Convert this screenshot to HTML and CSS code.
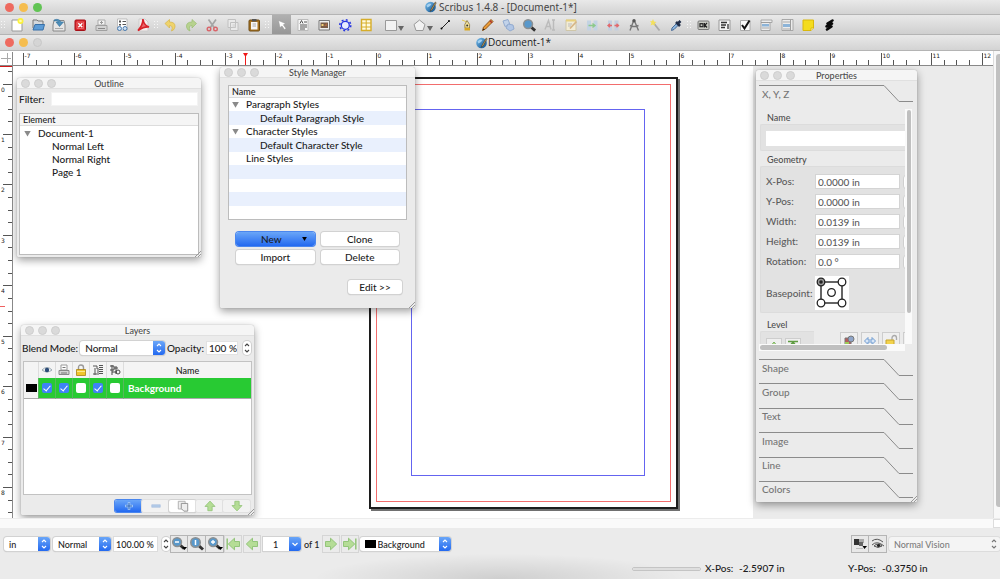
FILE: index.html
```html
<!DOCTYPE html>
<html lang="en">
<head>
<meta charset="utf-8">
<title>Scribus 1.4.8 - [Document-1*]</title>
<link rel="stylesheet" href="styles.css">
</head>
<body>
<svg class="defs" aria-hidden="true">
  <defs>
    <linearGradient id="ball" x1="0" y1="0" x2="1" y2="1"><stop offset="0" stop-color="#7cc0ee"/><stop offset="1" stop-color="#0d4f8c"/></linearGradient>
    <symbol id="logo" viewBox="0 0 12 12"><circle cx="5.500" cy="6" r="5.300" fill="url(#ball)"/><path d="M1.500 4.500Q4 1.500 6.500 3Q5 6 2.500 6.500z" fill="#a4d0ef"/><path d="M10.300 1L6.300 7.800L5 10.500L7.300 8.800L11.200 1.800z" fill="#dba84c" stroke="#33383c" stroke-width=".6"/></symbol>
    <symbol id="lens" viewBox="0 0 16 16"><path d="M9 9L14 13.500" stroke="#333" stroke-width="3"/><circle cx="6.500" cy="6.500" r="4.700" fill="#5898cb" stroke="#8b8f91" stroke-width="1.600"/></symbol>
    <symbol id="arrow-r" viewBox="0 0 14 14"><path d="M1.500 4.500h5V1.200L12.700 7L6.500 12.800V9.500h-5z" fill="#b5dd96" stroke="#93c57a"/></symbol>
    <symbol id="updown" viewBox="0 0 8 14"><path d="M2 5L4 3L6 5M2 9L4 11L6 9" fill="none" stroke="currentColor" stroke-width="1.100"/></symbol>
  </defs>
</svg>

<header class="titlebar">
  <div class="lights"><i class="red"></i><i class="amber"></i><i class="green"></i></div>
  <h1 class="app-title"><svg class="logo"><use href="#logo"/></svg>Scribus 1.4.8 - [Document-1*]</h1>
</header>

<nav class="toolbar" aria-label="Tools">
  <span class="grip"></span>
  <button class="tool" aria-label="New"><svg viewBox="0 0 16 16"><path d="M3 3h10v11H3z" fill="#fff" stroke="#999"/><circle cx="11.500" cy="4" r="3" fill="#fbf23c"/><circle cx="11.500" cy="4" r="1.300" fill="#fffbb0"/></svg></button>
  <button class="tool" aria-label="Open"><svg viewBox="0 0 16 16"><path d="M3 11V3h4l1 1h5v6" fill="#d4d8dc" stroke="#777"/><path d="M3 13L5 7.500h9.500L13 13z" fill="#5c9bd6" stroke="#376fa8"/></svg></button>
  <button class="tool" aria-label="Save"><svg viewBox="0 0 16 16"><path d="M3 3.500h10L14 8v6H2V8z" fill="#e6e6e6" stroke="#888"/><path d="M4 11.500h8" stroke="#aaa"/><path d="M3 3Q8 1 10 5h2.500L8.500 9.500L5 5h2.500Q6 3 3 4z" fill="#4f8fb9" stroke="#2f6f9c" stroke-width=".6"/></svg></button>
  <button class="tool" aria-label="Close"><svg viewBox="0 0 16 16"><rect x="3" y="3" width="10.500" height="10.500" rx="1" fill="#d9252b" stroke="#a51018"/><path d="M5 5h6.500v6.500H5z" fill="none" stroke="#ef8080" stroke-width=".7"/><path d="M6.300 6.300l4 4M10.300 6.300l-4 4" stroke="#fff" stroke-width="1.500"/></svg></button>
  <button class="tool" aria-label="Print"><svg viewBox="0 0 16 16"><path d="M5 3h7v5H5z" fill="#f3f3f3" stroke="#aaa"/><path d="M7 5.500h3M8.500 4v3" stroke="#999"/><path d="M3 8.500h11v5H3z" fill="#d2d2d2" stroke="#a0a0a0"/><path d="M5 11.500h7" stroke="#888"/></svg></button>
  <button class="tool" aria-label="Preflight"><svg viewBox="0 0 16 16"><path d="M3.500 2h9.500v11h-9.500z" fill="#fff" stroke="#aaa" stroke-width=".7"/><path d="M5 3.500h2v2H5zM5 7h2v1.500H5z" fill="#555"/><path d="M8.500 4.500H12M8.500 7.500H12" stroke="#555"/><circle cx="5.500" cy="11.500" r="2" fill="#cfe2f5" stroke="#4b7cb0"/><circle cx="11" cy="11.500" r="2" fill="#cfe2f5" stroke="#4b7cb0"/></svg></button>
  <button class="tool" aria-label="Export PDF"><svg viewBox="0 0 16 16"><path d="M4 2h6l3 3v9H4z" fill="#f6eeee" stroke="#ccc"/><path d="M8 2Q8.500 8 14 10Q9 9.500 3 13.500Q8 8 8 2z" fill="#e8686c" stroke="#d8232a" stroke-width="1.700"/></svg></button>
  <span class="grip"></span>
  <button class="tool" aria-label="Undo"><svg viewBox="0 0 16 16"><path d="M3 6.500L7.500 2.500V5Q13.500 5 13 10Q12.500 13 9.500 14Q11.500 8.500 7.500 8.500V11z" fill="#efd36c" stroke="#d5b548" stroke-width=".7"/></svg></button>
  <button class="tool" aria-label="Redo"><svg viewBox="0 0 16 16"><path d="M13.500 6.500L9 2.500V5Q3 5 3.500 10Q4 13 7 14Q5 8.500 9 8.500V11z" fill="#b7d28f" stroke="#9bbd72" stroke-width=".7"/></svg></button>
  <button class="tool" aria-label="Cut"><svg viewBox="0 0 16 16"><path d="M4.500 2.500L10.500 11M12 2.500L6 11" stroke="#a5a5a5" stroke-width="1.700"/><circle cx="5" cy="12" r="1.800" fill="none" stroke="#d9656a" stroke-width="1.400"/><circle cx="11.500" cy="12" r="1.800" fill="none" stroke="#d9656a" stroke-width="1.400"/></svg></button>
  <button class="tool" aria-label="Copy"><svg viewBox="0 0 16 16"><path d="M3 2.500h7.500v8H3zM5.500 5.500H13v8H5.500z" fill="#e9e9e9" stroke="#c0c0c0"/><path d="M7.500 8H11M7.500 10H11" stroke="#ccc"/></svg></button>
  <button class="tool" aria-label="Paste"><svg viewBox="0 0 16 16"><rect x="3" y="3" width="10.500" height="11" rx="1" fill="#a87422" stroke="#6e4a12"/><path d="M5 5h6.500v7.500H5z" fill="#f7f7f7"/><path d="M6 2h4.500v2.500H6z" fill="#555"/><path d="M6.500 7h3.500M6.500 9h3.500" stroke="#aaa"/></svg></button>
  <span class="grip wide"></span>
  <button class="tool active" aria-label="Select item" aria-pressed="true"><svg viewBox="0 0 16 16"><path d="M4.500 3.500L11.500 6.500L9.300 7.800L12 11.500L10.500 12.500L8 9L6 10.500z" fill="#fff" stroke="#999" stroke-width=".5"/></svg></button>
  <button class="tool" aria-label="Text frame"><svg viewBox="0 0 16 16"><path d="M3 2.500h10v11H3z" fill="#f8f8f8" stroke="#bbb"/><path d="M5 6.500L6.500 3.500L8 6.500M9 5h3M5 8h7M5 10h7M5 12h5" fill="none" stroke="#555"/></svg></button>
  <button class="tool" aria-label="Image frame"><svg viewBox="0 0 16 16"><path d="M3 3.500h10.500v9.500H3z" fill="#eee" stroke="#777"/><path d="M4.500 5.500H12V11H4.500z" fill="#7a5c46"/><path d="M5.500 7h2v2h-2z" fill="#f3d37a"/><path d="M8 9h3V6z" fill="#b06b45"/></svg></button>
  <button class="tool" aria-label="Render frame"><svg viewBox="0 0 16 16"><circle cx="8.300" cy="8.300" r="4" fill="#e7ecff" stroke="#2534e0" stroke-width="1.300"/><circle cx="8.300" cy="8.300" r="5.500" fill="none" stroke="#2534e0" stroke-width="1.500" stroke-dasharray="1.900 2.400"/></svg></button>
  <button class="tool" aria-label="Table"><svg viewBox="0 0 16 16"><path d="M3.500 2.500h9.500v11H3.500z" fill="#fffbe0" stroke="#d6ad2a" stroke-width="1.400"/><path d="M8.200 3v10M4 6h9M4 10h9" stroke="#d6ad2a"/></svg></button>
  <button class="tool menu" aria-label="Shape"><svg viewBox="0 0 29 16"><path d="M9.500 3.500h11v10h-11z" fill="#f2f2f2" stroke="#999"/><path d="M22 9h6l-3 5z" fill="#666"/></svg></button>
  <button class="tool menu" aria-label="Polygon"><svg viewBox="0 0 29 16"><path d="M14.500 3L20 7.500L18 13.500h-7L9 7.500z" fill="#f2f2f2" stroke="#999"/><path d="M22 9h6l-3 5z" fill="#666"/></svg></button>
  <button class="tool" aria-label="Line"><svg viewBox="0 0 16 16"><path d="M4.500 11.500L12 4" stroke="#222"/><circle cx="4.500" cy="11.500" r="1"/><circle cx="12" cy="4" r="1"/></svg></button>
  <button class="tool" aria-label="Bezier curve"><svg viewBox="0 0 16 16"><path d="M4 3L9 5" stroke="#e6c84f"/><path d="M9 3.500Q13 8 11.500 11H7Q5.500 8 9 3.500z" fill="#f3e29a" stroke="#9a8a58"/><path d="M6.500 11h5.500v2.500H6.500z" fill="#d9a822"/><circle cx="9.200" cy="8.500" r="1" fill="#333"/></svg></button>
  <button class="tool" aria-label="Freehand line"><svg viewBox="0 0 16 16"><path d="M12 2.500L14 4.500L6.500 12L3.500 13.500L4.500 10.200z" fill="#ea9b37" stroke="#8f5417"/><path d="M3.500 13.500l1-2 1.200 1z" fill="#222"/><path d="M11 3.700l2 2" stroke="#a33" stroke-width="1.400"/></svg></button>
  <button class="tool" aria-label="Rotate"><svg viewBox="0 0 16 16"><path d="M3 4l5-1.500 2 5-5 2z" fill="#c2d3ea" stroke="#93abcf"/><path d="M8 7l5 1 1 4-4 2-4-3z" fill="#b1c6e5" stroke="#93abcf"/></svg></button>
  <button class="tool" aria-label="Zoom"><svg viewBox="0 0 16 16"><use href="#lens" x="1" y="1" width="15" height="15"/></svg></button>
  <button class="tool" aria-label="Edit contents"><svg viewBox="0 0 16 16"><path d="M3 12.500L6.500 3.500L9 12.500M4.500 9.500h4M11.500 3v10M10 3h3M10 13h3" fill="none" stroke="#bbb" stroke-width="1.400"/></svg></button>
  <button class="tool" aria-label="Story editor"><svg viewBox="0 0 16 16"><path d="M3 3h10v10.500H3z" fill="#f2ecd6" stroke="#cfc6a8"/><path d="M3 3.500h10" stroke="#e8d07c" stroke-width="2"/><path d="M13.500 4.500L7 11.500" stroke="#d6b586" stroke-width="1.800"/><path d="M5 7h4M5 9h3" stroke="#bbb"/></svg></button>
  <button class="tool" aria-label="Link frames"><svg viewBox="0 0 16 16"><path d="M3 3.500h4v10H3zM9.500 3.500h4v10h-4z" fill="#c3d3e3"/><path d="M4.500 8.500h6M8.500 6.500l2.500 2-2.500 2" fill="none" stroke="#8cc98c" stroke-width="1.400"/></svg></button>
  <button class="tool" aria-label="Unlink frames"><svg viewBox="0 0 16 16"><path d="M3 3.500h4v10H3zM9.500 3.500h4v10h-4z" fill="#c3cfe0"/><path d="M3.500 8.500h3.500M9.500 8.500H13M5 6.800l-2 1.700 2 1.700M11.500 6.800l2 1.700-2 1.700" fill="none" stroke="#e2696c" stroke-width="1.300"/></svg></button>
  <button class="tool" aria-label="Measure"><svg viewBox="0 0 16 16"><path d="M7.500 4L4 13.500M8.500 4L12.500 13.500M4 8.500Q8 10.500 12.500 8.500" fill="none" stroke="#777" stroke-width="1.400"/><circle cx="8" cy="3.800" r="1.700" fill="#555"/></svg></button>
  <button class="tool" aria-label="Copy properties"><svg viewBox="0 0 16 16"><path d="M7 6.500L12.500 13.500" stroke="#aaa" stroke-width="1.800"/><path d="M6 2l1 2.500 2.500.5-2 1.500.5 2.500-2-1.500L3.500 8.500l1-2.500L3 4l2 .2z" fill="#f4e05c"/></svg></button>
  <button class="tool" aria-label="Eye dropper"><svg viewBox="0 0 16 16"><path d="M9 6L4 11L3.500 13.500L6 12.500L10.500 8" fill="#8bb6e0" stroke="#4a6b96"/><path d="M8 5l4 4M10 6.500L12.500 4" stroke="#222f4a" stroke-width="2.600"/></svg></button>
  <span class="grip"></span>
  <button class="tool" aria-label="Push button"><svg viewBox="0 0 16 16"><rect x="3" y="4" width="11" height="8.500" rx="1" fill="#c9cbc4" stroke="#777"/><rect x="5" y="6.700" width="3" height="3" fill="none" stroke="#222" stroke-width="1.200"/><path d="M9.500 6v4.500M12 6L10 8.200L12 10.500" fill="none" stroke="#222" stroke-width="1.200"/></svg></button>
  <button class="tool" aria-label="Text field"><svg viewBox="0 0 16 16"><path d="M3 3h11v10.500H3z" fill="#f5f5f5" stroke="#999"/><path d="M5 5.500h6M5 8h5M5 10.500h4M12 7v5" stroke="#333" stroke-width="1.300"/></svg></button>
  <button class="tool" aria-label="Check box"><svg viewBox="0 0 16 16"><path d="M3.500 3.500h9.500v10H3.500z" fill="#f8f8f8" stroke="#aaa"/><path d="M5 8l2.500 3.500L12.500 3.500" fill="none" stroke="#111" stroke-width="2"/></svg></button>
  <button class="tool" aria-label="Combo box"><svg viewBox="0 0 16 16"><path d="M3 3h11v2.500H3zM3 5.500h9v8H3z" fill="#ececec" stroke="#999" stroke-width=".8"/><path d="M4 7h7v2.500H4z" fill="#8db4d8"/><path d="M4 11h7" stroke="#aaa"/></svg></button>
  <button class="tool" aria-label="List box"><svg viewBox="0 0 16 16"><path d="M3 2.500h8.500v11H3zM11.500 2.500H14v11h-2.500z" fill="#ececec" stroke="#999" stroke-width=".8"/><path d="M4 7h7v3H4z" fill="#8db4d8"/><path d="M4 5h7M4 12h7" stroke="#aaa"/></svg></button>
  <button class="tool" aria-label="Text annotation"><svg viewBox="0 0 16 16"><path d="M3 3h10.500v8l-2.500 2.500H3z" fill="#f4dc1e" stroke="#d9b80d"/><path d="M13.500 11H11v2.500" fill="#fff3a0" stroke="#d0ac08" stroke-width=".7"/></svg></button>
  <button class="tool" aria-label="Link annotation"><svg viewBox="0 0 16 16"><path d="M11.500 3.500L6.500 6.500M11 6.500L5.500 9.500M10.500 9.500L6 12.500" stroke="#0a0a0a" stroke-width="2.600" stroke-linecap="round"/></svg></button>
</nav>

<div class="docbar">
  <div class="lights"><i class="red"></i><i class="amber"></i><i class="off"></i></div>
  <h2 class="doc-title"><svg class="logo"><use href="#logo"/></svg>Document-1*</h2>
</div>

<main class="workspace">
  <svg class="corner" viewBox="0 0 13 15" aria-hidden="true"><path d="M1 7.500h10M7.500 2v10" stroke="#aaa"/><path d="M12.500 1v14M0 14.500h13" stroke="#888"/></svg>
  <svg class="ruler-h" id="ruler-h"></svg>
  <svg class="ruler-v" id="ruler-v"></svg>
  <div class="vscroll"><span class="thumb"></span></div>

  <div class="canvas">
    <div class="page"><div class="margins"></div><div class="guides"></div></div>

    <section class="window outline" aria-label="Outline">
      <h3 class="wintitle"><span class="dots"><i></i><i></i><i></i></span>Outline</h3>
      <div class="filter"><label for="filter">Filter:</label><input id="filter" type="text"></div>
      <div class="list">
        <div class="list-head">Element</div>
        <ul class="tree">
          <li class="open">Document-1</li>
          <li class="child">Normal Left</li>
          <li class="child">Normal Right</li>
          <li class="child">Page 1</li>
        </ul>
      </div>
      <svg class="resize" viewBox="0 0 6 6"><path d="M0 6L6 0M3 6L6 3" stroke="#999"/></svg>
    </section>

    <section class="window styles" aria-label="Style Manager">
      <h3 class="wintitle"><span class="dots"><i></i><i></i><i></i></span>Style Manager</h3>
      <div class="list">
        <div class="list-head">Name</div>
        <ul class="tree striped">
          <li class="open">Paragraph Styles</li>
          <li class="child">Default Paragraph Style</li>
          <li class="open">Character Styles</li>
          <li class="child">Default Character Style</li>
          <li>Line Styles</li>
          <li></li><li></li><li></li><li></li>
        </ul>
      </div>
      <div class="actions">
        <button class="btn primary">New<svg viewBox="0 0 6 5"><path d="M0 0h6L3 5z"/></svg></button>
        <button class="btn">Clone</button>
        <button class="btn">Import</button>
        <button class="btn">Delete</button>
      </div>
      <button class="btn edit">Edit &gt;&gt;</button>
      <svg class="resize" viewBox="0 0 6 6"><path d="M0 6L6 0M3 6L6 3" stroke="#999"/></svg>
    </section>

    <section class="window layers" aria-label="Layers">
      <h3 class="wintitle"><span class="dots"><i></i><i></i><i></i></span>Layers</h3>
      <div class="blend">
        <label for="blend">Blend Mode:</label>
        <span class="select"><select id="blend"><option>Normal</option></select><svg><use href="#updown"/></svg></span>
        <label for="opacity">Opacity:</label>
        <input id="opacity" type="text" value="100 %">
        <button class="spin" aria-label="Change opacity"><svg><use href="#updown"/></svg></button>
      </div>
      <div class="tablebox">
        <table class="layer-table">
          <thead><tr>
            <th class="ic first"></th>
            <th class="ic"><svg viewBox="0 0 12 12"><path d="M1 6Q6 1 11 6Q6 10 1 6z" fill="#f5f5f5" stroke="#9aa8b2"/><circle cx="6" cy="6" r="2.200" fill="#2c4c78"/></svg></th>
            <th class="ic"><svg viewBox="0 0 12 12"><path d="M3 1h6v5H3z" fill="#fff" stroke="#999"/><path d="M1 6.500h10v4H1z" fill="#d4d4d4" stroke="#888"/><path d="M4.500 3.500h3M3 9h6" stroke="#777"/></svg></th>
            <th class="ic"><svg viewBox="0 0 12 12"><path d="M3.500 6V3.500Q3.500 1 6 1Q8.500 1 8.500 3.500V6" fill="none" stroke="#999" stroke-width="1.400"/><path d="M1.500 5.500h9v6h-9z" fill="#f0c62c" stroke="#a98212" stroke-width=".8"/><path d="M2 7.500h8" stroke="#fbe88c"/></svg></th>
            <th class="ic"><svg viewBox="0 0 12 12"><path d="M1 2h4v3M3 4v7M1 10h4M7 1.500h4M7 3.500h4M7 5.500h4M7 7.500h4M7 9.500h4M6 4v7" fill="none" stroke="#555"/></svg></th>
            <th class="ic"><svg viewBox="0 0 12 12"><path d="M1 2h4v4H1M3 1v10M5 4h4M3 8h5" fill="none" stroke="#444"/><circle cx="9" cy="8" r="2" fill="none" stroke="#444"/><path d="M7 2v8" stroke="#444"/></svg></th>
            <th>Name</th>
          </tr></thead>
          <tbody><tr>
            <td class="ic swatch"><span></span></td>
            <td class="ic"><input type="checkbox" aria-label="Visible" checked></td>
            <td class="ic"><input type="checkbox" aria-label="Printable" checked></td>
            <td class="ic"><input type="checkbox" aria-label="Locked"></td>
            <td class="ic"><input type="checkbox" aria-label="Text flow" checked></td>
            <td class="ic"><input type="checkbox" aria-label="Outline mode"></td>
            <td class="name">Background</td>
          </tr></tbody>
        </table>
      </div>
      <div class="layer-buttons">
        <button class="btn primary" aria-label="Add layer"><svg viewBox="0 0 14 14"><path d="M2.500 7h9M7 2.500v9" stroke="#a9cdf8" stroke-width="3"/><path d="M3.500 7h7M7 3.500v7" stroke="#3168b8" stroke-width="1.200"/></svg></button>
        <button class="btn flat" aria-label="Delete layer"><svg viewBox="0 0 14 14"><path d="M2 5.500h10v3H2z" fill="#b3cbe8" stroke="#a0bbdd" stroke-width=".6"/></svg></button>
        <button class="btn" aria-label="Duplicate layer"><svg viewBox="0 0 14 14"><path d="M1.500 1.500h8v9h-8z" fill="#eee" stroke="#aaa"/><path d="M5 4h7.500v9H8L5 10z" fill="#eee" stroke="#888"/></svg></button>
        <button class="btn flat" aria-label="Raise layer"><svg viewBox="0 0 14 14"><use href="#arrow-r" transform="rotate(-90 7 7)" width="14" height="14"/></svg></button>
        <button class="btn flat" aria-label="Lower layer"><svg viewBox="0 0 14 14"><use href="#arrow-r" transform="rotate(90 7 7)" width="14" height="14"/></svg></button>
      </div>
      <svg class="resize" viewBox="0 0 6 6"><path d="M0 6L6 0M3 6L6 3" stroke="#999"/></svg>
    </section>

    <div class="backdrop"></div>
    <section class="window props" aria-label="Properties">
      <h3 class="wintitle"><span class="dots"><i></i><i></i><i></i></span>Properties</h3>
      <button class="tab first">X, Y, Z<svg viewBox="0 0 29 17"><path d="M0 .5L15 16.500H29" fill="none" stroke="#8b8b8b"/></svg></button>
      <div class="scrollarea">
        <div class="pane">
          <label class="legend" for="objname">Name</label>
          <div class="group namebox"><input id="objname" type="text"></div>
          <div class="legend">Geometry</div>
          <div class="group geometry">
            <label for="xpos">X-Pos:</label><input id="xpos" type="text" value="0.0000 in"><button class="spin" aria-label="Change X"><svg><use href="#updown"/></svg></button>
            <label for="ypos">Y-Pos:</label><input id="ypos" type="text" value="0.0000 in"><button class="spin" aria-label="Change Y"><svg><use href="#updown"/></svg></button>
            <label for="wid">Width:</label><input id="wid" type="text" value="0.0139 in"><button class="spin" aria-label="Change width"><svg><use href="#updown"/></svg></button>
            <label for="hei">Height:</label><input id="hei" type="text" value="0.0139 in"><button class="spin" aria-label="Change height"><svg><use href="#updown"/></svg></button>
            <label for="rot">Rotation:</label><input id="rot" type="text" value="0.0 °"><button class="spin" aria-label="Change rotation"><svg><use href="#updown"/></svg></button>
            <span>Basepoint:</span>
            <svg class="basepoint" viewBox="0 0 34 34"><path d="M6 6h21v21H6z" fill="none" stroke="#333" stroke-width="1.500"/><g fill="#fff" stroke="#222" stroke-width="1.300"><circle cx="6" cy="6" r="3.800" fill="#999"/><circle cx="27" cy="6" r="3.800"/><circle cx="6" cy="27" r="3.800"/><circle cx="27" cy="27" r="3.800"/><circle cx="16.500" cy="16.500" r="3.800"/></g><circle cx="6" cy="6" r="1.800" fill="#222"/></svg>
          </div>
          <div class="legend">Level</div>
          <div class="level">
            <div class="group levelbox">
              <button class="mini" aria-label="Raise"><svg viewBox="0 0 14 14"><path d="M7 3L11 8H3z" fill="#b5dd96" stroke="#7cb35f"/></svg></button>
              <button class="mini" aria-label="Raise to top"><svg viewBox="0 0 14 14"><path d="M2 2.500h10M7 3L11 8H3z" fill="#6aa84a" stroke="#5f9c42" stroke-width="1.400"/></svg></button>
            </div>
            <div class="level-tools">
              <button class="mini" aria-label="Group"><svg viewBox="0 0 14 14"><path d="M3 4h6v8H3z" fill="#b95a5a" stroke="#777"/><circle cx="9" cy="5" r="3" fill="#8fa5c9" stroke="#777"/><path d="M3 8h4v4H3z" fill="#9bcb58"/></svg></button>
              <button class="mini" aria-label="Flip"><svg viewBox="0 0 14 14"><path d="M1.500 7L5 3.500V6h4V3.500L12.500 7L9 10.500V8H5v2.500z" fill="#d8e6f7" stroke="#6f9bd0"/></svg></button>
              <button class="mini" aria-label="Lock"><svg viewBox="0 0 14 14"><path d="M8 6V4Q8 1.500 10.500 1.500Q12.500 1.500 12.500 4V6" fill="none" stroke="#aaa" stroke-width="1.300"/><path d="M2 6h8v6H2z" fill="#f3d34d" stroke="#c7a42c"/></svg></button>
              <button class="mini" aria-label="Lock size"></button>
            </div>
          </div>
        </div>
        <div class="pv"><span></span></div>
        <div class="ph"><span></span></div>
      </div>
      <div class="tabs">
        <button class="tab">Shape<svg viewBox="0 0 29 17"><path d="M0 .5L15 16.500H29" fill="none" stroke="#8b8b8b"/></svg></button>
        <button class="tab">Group<svg viewBox="0 0 29 17"><path d="M0 .5L15 16.500H29" fill="none" stroke="#8b8b8b"/></svg></button>
        <button class="tab">Text<svg viewBox="0 0 29 17"><path d="M0 .5L15 16.500H29" fill="none" stroke="#8b8b8b"/></svg></button>
        <button class="tab">Image<svg viewBox="0 0 29 17"><path d="M0 .5L15 16.500H29" fill="none" stroke="#8b8b8b"/></svg></button>
        <button class="tab">Line<svg viewBox="0 0 29 17"><path d="M0 .5L15 16.500H29" fill="none" stroke="#8b8b8b"/></svg></button>
        <button class="tab">Colors<svg viewBox="0 0 29 17"><path d="M0 .5L15 16.500H29" fill="none" stroke="#8b8b8b"/></svg></button>
      </div>
      <svg class="resize" viewBox="0 0 6 6"><path d="M0 6L6 0M3 6L6 3" stroke="#999"/></svg>
    </section>
  </div>
</main>
<div class="hscroll"><span></span></div>

<footer class="status">
  <div class="controls">
    <span class="select unit"><select aria-label="Unit"><option>in</option></select><svg><use href="#updown"/></svg></span>
    <span class="select quality"><select aria-label="Preview quality"><option>Normal</option></select><svg><use href="#updown"/></svg></span>
    <input class="zoom" type="text" aria-label="Zoom" value="100.00 %">
    <button class="spin" aria-label="Change zoom"><svg><use href="#updown"/></svg></button>
    <div class="zoomset">
      <button class="square" aria-label="Zoom out"><svg viewBox="0 0 16 16"><use href="#lens" width="15" height="15"/><path d="M4 6h4" stroke="#fff" stroke-width="1.500"/><path d="M11 11h5l-2.500 3z"/></svg></button>
      <button class="square" aria-label="Zoom to 100%"><svg viewBox="0 0 16 16"><use href="#lens" width="16" height="16"/><path d="M6.500 4v5" stroke="#fff" stroke-width="1.500"/></svg></button>
      <button class="square" aria-label="Zoom in"><svg viewBox="0 0 16 16"><use href="#lens" width="15" height="15"/><path d="M4 6h4M6 4v4" stroke="#fff" stroke-width="1.300"/><path d="M11 11h5l-2.500 3z"/></svg></button>
    </div>
    <div class="navset">
      <button class="nav" aria-label="First page"><svg viewBox="0 0 14 14"><use href="#arrow-r" transform="rotate(180 7 7)" x="-1" width="14" height="14"/><path d="M1.200 1.500v11" stroke="#93c57a" stroke-width="1.500"/></svg></button>
      <button class="nav" aria-label="Previous page"><svg viewBox="0 0 14 14"><use href="#arrow-r" transform="rotate(180 7 7)" width="14" height="14"/></svg></button>
    </div>
    <span class="select pageno"><select aria-label="Page"><option>1</option></select><svg viewBox="0 0 8 14"><path d="M1.500 6L4 8.500L6.500 6" fill="none" stroke="currentColor" stroke-width="1.200"/></svg></span>
    <span class="of">of 1</span>
    <div class="navset">
      <button class="nav" aria-label="Next page"><svg viewBox="0 0 14 14"><use href="#arrow-r" width="14" height="14"/></svg></button>
      <button class="nav" aria-label="Last page"><svg viewBox="0 0 14 14"><use href="#arrow-r" x="-1" width="14" height="14"/><path d="M12.800 1.500v11" stroke="#93c57a" stroke-width="1.500"/></svg></button>
    </div>
    <span class="select layer"><i class="chip"></i><select aria-label="Layer"><option>Background</option></select><svg><use href="#updown"/></svg></span>
    <div class="vision">
      <button class="square" aria-label="Color management"><svg viewBox="0 0 16 16"><path d="M2 3h5v6H2z" fill="#333"/><path d="M7 3h5v4H7z" fill="#aaa"/><path d="M7 6h4v4H7z" fill="#666"/><path d="M4 12.500h7" stroke="#bbb"/><path d="M10.500 10h4.500L12.500 13z"/></svg></button>
      <button class="square" aria-label="Preview mode"><svg viewBox="0 0 16 16"><path d="M2 5Q7 1 13 6M2 9Q7 4 14 10M4 10Q8 6 12 10Q8 13 4 10z" fill="none" stroke="#555"/><circle cx="8.500" cy="9.500" r="1.600" fill="#222"/></svg></button>
      <span class="select disabled"><select aria-label="Vision" disabled><option>Normal Vision</option></select><svg><use href="#updown"/></svg></span>
    </div>
  </div>
  <div class="position">
    <progress value="0" max="100" aria-label="Progress"></progress>
    <span>X-Pos:</span><span class="value">-2.5907 in</span>
    <span>Y-Pos:</span><span class="value">-0.3750 in</span>
  </div>
</footer>
<script src="rulers.js"></script>
</body>
</html>
```

FILE: styles.css
```css
* { box-sizing: border-box; }
html, body { height: 100%; }
body {
  margin: 0;
  display: flex;
  flex-direction: column;
  overflow: hidden;
  background: #ebebeb;
  color: #1c1c1c;
  font: 500 10px/13px Lato, "Noto Sans", sans-serif;
}
button, input, select {
  font: inherit;
  color: inherit;
  margin: 0;
  padding: 0;
  border: 0;
  border-radius: 0;
  background: none;
  appearance: none;
  min-width: 0;
}
h1, h2, h3, ul { margin: 0; padding: 0; font: inherit; list-style: none; }
svg { display: block; flex: none; }
.defs { position: absolute; width: 0; height: 0; }

/* Title bars */
.titlebar, .docbar {
  display: grid;
  grid-template-columns: 1fr auto 1fr;
  align-items: center;
  padding: 0 5px;
  border-bottom: 1px solid #b4b4b4;
  background: linear-gradient(#e9e9e9, #d3d3d3);
}
.titlebar { height: 15px; }
.docbar { height: 16px; }
.lights { display: flex; gap: 5px; }
.lights i { width: 9px; height: 9px; border-radius: 50%; }
.lights .red { background: #ee6a5f; }
.lights .amber { background: #f5bd4f; }
.lights .green { background: #61c454; }
.lights .off { background: #d5d5d5; border: 1px solid #c8c8c8; }
.app-title, .doc-title { display: flex; align-items: center; }
.app-title { gap: 2px; padding-left: 2px; color: #454545; font: 10px/13px "Noto Sans", sans-serif; }
.doc-title { padding-left: 27px; font: 500 10px/13px "Open Sans", "Noto Sans", sans-serif; }
.logo { width: 12px; height: 12px; }

/* Toolbar */
.toolbar {
  display: flex;
  align-items: center;
  height: 20px;
  border-bottom: 1px solid #b4b4b4;
  background: linear-gradient(#e9e9e9, #cfcfcf);
}
.tool { width: 21px; height: 19px; display: grid; place-items: center; }
.tool svg { width: 16px; height: 16px; }
.tool.menu { width: 29px; }
.tool.menu svg { width: 29px; }
.tool.active { width: 19px; margin: 0 1px; background: linear-gradient(#b0b0b0, #979797); }
.grip { width: 6px; height: 9px; background: radial-gradient(circle, #f6f6f6 1px, transparent 1px) 0 0 / 3px 3px; }
.grip.wide { width: 7px; }

/* Workspace */
.workspace {
  flex: 1;
  min-height: 0;
  display: grid;
  grid-template-columns: 13px 1fr 7px;
  grid-template-rows: 15px 1fr;
  background: #fff;
}
.corner { width: 13px; height: 15px; background: #fff; }
.ruler-h { width: 100%; height: 15px; background: #fff; }
.ruler-v { width: 13px; height: 100%; min-height: 0; grid-row: 2; grid-column: 1; background: #fff; }
.ruler-h text, .ruler-v text { font: 6px "DejaVu Sans", sans-serif; fill: #222; }
.vscroll {
  grid-column: 3;
  grid-row: 1 / 3;
  padding: 3px 0 11px 2px;
  background: #f8f8f8;
  border-left: 1px solid #ddd;
  display: flex;
}
.thumb { flex: 1; border-radius: 3px 0 0 3px; background: #c1c1c1; }
.hscroll { height: 10px; background: #fafafa; border-top: 1px solid #ececec; display: flex; justify-content: flex-end; }
.hscroll span { width: 7px; background: #fff; border: 1px solid #ddd; border-right: 0; }
.canvas { position: relative; grid-row: 2; grid-column: 2; overflow: hidden; }

/* Document page */
.page {
  position: absolute;
  left: 356px;
  top: 11px;
  width: 309px;
  height: 432px;
  border: 2px solid #1c1c1c;
  background: #fff;
  box-shadow: 2px 2px 0 #707070;
}
.margins { position: absolute; inset: 5px; border: 1px solid #f26d6d; }
.guides { position: absolute; inset: 30px 31px 31px 40px; border: 1px solid #6464f0; }
.backdrop { position: absolute; left: 740px; right: 0; top: 0; bottom: 0; background: #ebebeb; }

/* Floating windows */
.window {
  position: absolute;
  display: flex;
  flex-direction: column;
  border-radius: 3px 3px 1px 1px;
  background: #ebebeb;
  box-shadow: 0 0 1px #8c8c8c, 0 3px 8px rgba(0, 0, 0, .4);
}
.outline { left: 4px; top: 12px; width: 184px; height: 179px; }
.styles { left: 207px; top: 1px; width: 195px; height: 241px; }
.layers { left: 8px; top: 259px; width: 233px; height: 190px; }
.props { left: 743px; top: 4px; width: 161px; height: 432px; color: #5c5c5c; }
.wintitle {
  position: relative;
  height: 11px;
  flex: none;
  text-align: center;
  font-size: 9px;
  line-height: 11px;
  color: #4d4d4d;
  background: #f5f5f5;
  border-bottom: 1px solid #e0e0e0;
  border-radius: 3px 3px 0 0;
}
.dots { position: absolute; left: 4px; top: 1px; display: flex; gap: 4px; }
.dots i { width: 9px; height: 9px; border-radius: 50%; background: #dadada; border: 1px solid #cecece; }
.resize { position: absolute; right: 0; bottom: 0; width: 6px; height: 6px; }

.filter { display: flex; align-items: center; gap: 6px; padding: 3px 3px 7px 2px; }
.filter input { flex: 1; height: 14px; background: #fff; border: 1px solid #f3f3f3; }
.list { flex: 1; display: flex; flex-direction: column; margin: 0 2px 2px; border: 1px solid #bcbcbc; background: #fff; }
.list-head { flex: none; height: 12px; padding-left: 3px; font-size: 9px; line-height: 11px; background: #f5f5f5; border-bottom: 1px solid #dcdcdc; }
.tree { display: grid; padding-top: 1px; }
.tree li { min-height: 13px; padding-left: 18px; display: flex; align-items: center; }
.tree .open::before { content: ""; width: 7px; height: 6px; margin: 0 7px 0 -14px; background: #8a8a8a; clip-path: polygon(0 0, 100% 0, 50% 100%); }
.tree .child { padding-left: 32px; }
.striped { flex: 1; grid-auto-rows: 1fr; padding-top: 0; }
.striped li { padding-left: 17px; }
.striped .child { padding-left: 31px; }
.striped li:nth-child(even) { background: #e9f0fd; }

.btn {
  display: flex;
  align-items: center;
  justify-content: center;
  height: 14px;
  border-radius: 3px;
  background: #fff;
  box-shadow: 0 0 0 1px #d2d2d2, 0 1px 1px #aaa;
}
.btn.primary { background: linear-gradient(#6aa6f8, #2369f0); box-shadow: 0 0 0 1px #4a86ee; }
.styles .list { flex: none; height: 135px; margin: 7px 8px 0; }
.actions { display: grid; grid-template-columns: 1fr 1fr; gap: 4px 6px; padding: 12px 16px 0; }
.actions .primary { position: relative; padding-right: 8px; }
.actions .primary svg { position: absolute; right: 8px; top: 5px; width: 5px; height: 4px; }
.edit { width: 54px; align-self: flex-end; margin: 16px 13px 0 0; }

/* Drop-downs and spin boxes */
.select { display: flex; align-items: center; height: 14px; background: #fff; border-radius: 3px; box-shadow: 0 0 0 1px #d2d2d2, 0 1px 1px #b5b5b5; }
.select select { flex: 1; height: 14px; padding-left: 5px; outline: 0; }
.select svg { width: 12px; height: 14px; padding: 0 2px; color: #fff; background: linear-gradient(#6aa6f8, #2369f0); border-radius: 0 3px 3px 0; pointer-events: none; }
.spin { width: 8px; height: 14px; flex: none; border-radius: 4px; background: #fff; box-shadow: 0 0 0 1px #cfcfcf; color: #444; }
.spin svg { width: 8px; height: 14px; }

/* Layers */
.blend { display: flex; align-items: center; padding: 5px 3px 6px 1px; gap: 2px; white-space: nowrap; }
.blend .select { flex: 1; }
.blend input { width: 32px; height: 14px; padding-left: 2px; background: #fff; border: 1px solid #e2e2e2; margin-right: 3px; }
.tablebox { flex: 1; margin: 0 2px; border: 1px solid #c2c2c2; background: #fff; }
.layer-table { width: 100%; border-collapse: separate; border-spacing: 0; table-layout: fixed; }
.layer-table th { height: 16px; padding: 0; background: #f4f4f4; font-weight: 500; font-size: 9px; border-right: 1px solid #ddd; }
.layer-table th:last-child { border-right: 0; }
.layer-table .ic { width: 17px; }
.layer-table .first { width: 15px; }
.layer-table th svg { width: 12px; height: 12px; margin: 0 auto; }
.layer-table td { height: 21px; padding: 0; background: #28ca33; border-right: 1px solid #57b85d; border-bottom: 1px solid #aaa; text-align: center; }
.layer-table .swatch { background: #f4f4f4; }
.swatch span { display: block; width: 11px; height: 8px; margin: 0 auto; background: #000; }
.layer-table .name { text-align: left; padding-left: 4px; color: #fff; font-weight: 700; border-right: 0; }
.layer-table input { display: block; width: 10px; height: 10px; margin: 0 auto; border-radius: 2px; background: #fff; }
.layer-table input:checked { background: #3f83f7; }
.layer-table input:checked::before { content: ""; display: block; width: 3px; height: 6px; margin: 1px 0 0 3px; border: solid #fff; border-width: 0 1px 1px 0; transform: rotate(40deg); }
.layer-buttons { display: grid; grid-template-columns: repeat(5, 27px); justify-content: end; padding: 5px 4px 3px; }
.layer-buttons .btn { height: 12px; border-radius: 2px; }
.layer-buttons svg { width: 14px; height: 12px; }
.btn.flat { background: #f2f2f2; box-shadow: 0 0 0 1px #e0e0e0; }

/* Properties */
.tab {
  position: relative;
  display: block;
  flex: none;
  width: 125px;
  height: 17px;
  margin-left: 3px;
  padding-left: 3px;
  text-align: left;
  line-height: 15px;
  color: #757575;
  border-top: 1px solid #8b8b8b;
}
.tab svg { position: absolute; left: 100%; top: -1px; width: 29px; height: 17px; }
.tab.first { margin-top: 4px; }
.scrollarea { display: grid; grid-template-columns: 1fr 7px; grid-template-rows: 235px 7px; margin: 7px 5px 0 3px; flex: none; }
.pane { overflow: hidden; padding: 3px 0 0 1px; }
.legend { display: block; height: 12px; padding-left: 7px; font-size: 9px; line-height: 12px; color: #4d4d4d; }
.group { background: #e2e2e2; border: 1px solid #dcdcdc; border-right: 0; border-radius: 2px 0 0 2px; }
.namebox { height: 27px; padding: 6px 0 0 5px; margin-bottom: 3px; }
.namebox input { display: block; width: 100%; height: 15px; background: #fff; }
.geometry {
  display: grid;
  grid-template-columns: 49px 85px 8px;
  grid-template-rows: repeat(5, 15px) 38px;
  row-gap: 5px;
  align-items: center;
  padding: 7px 0 0 5px;
  margin-bottom: 6px;
}
.geometry input { height: 15px; padding-left: 2px; background: #fff; border: 1px solid #d4d4d4; }
.geometry .spin { margin-left: 4px; }
.basepoint { width: 34px; height: 34px; background: #fff; }
.level { display: flex; justify-content: space-between; }
.levelbox { display: flex; gap: 3px; width: 54px; height: 30px; padding: 6px 0 0 5px; }
.mini { width: 16px; height: 16px; border: 1px solid #cdcdcd; background: #efefef; display: grid; place-items: center; flex: none; }
.mini svg { width: 14px; height: 14px; }
.level-tools { display: flex; gap: 3px; width: 65px; padding-top: 1px; overflow: hidden; }
.level-tools .mini { width: 18px; height: 18px; }
.pv { background: #fafafa; padding: 1px 1px 31px 2px; display: flex; }
.ph { background: #fafafa; padding: 1px 18px 1px 1px; display: flex; }
.pv span, .ph span { flex: 1; border-radius: 3px; background: #bfbfbf; }
.tabs { flex: 1; display: flex; flex-direction: column; justify-content: space-between; padding: 8px 0 4px; }

/* Status bar */
.status {
  height: 51px;
  flex: none;
  display: flex;
  flex-direction: column;
  background: radial-gradient(ellipse at 50% 100%, rgba(0, 0, 0, .12), transparent 60%) 50% 100% / 440px 30px no-repeat #ebebeb;
}
.controls { display: flex; align-items: center; padding: 6px 0 0 4px; height: 26px; white-space: nowrap; font-size: 9px; }
.unit { width: 46px; margin-right: 3px; }
.quality { width: 58px; margin-right: 2px; }
.zoom { width: 45px; height: 16px; padding-left: 2px; margin-right: 4px; background: #fff; border: 1px solid #dcdcdc; }
.zoomset, .navset, .vision { display: flex; align-items: center; }
.square { width: 18px; height: 18px; border: 1px solid #b5b5b5; background: #e8e8e8; display: grid; place-items: center; }
.square + .square { border-left: 0; }
.square svg { width: 16px; height: 16px; }
.navset { gap: 1px; }
.nav { width: 18px; height: 18px; border: 1px solid #d5d5d5; display: grid; place-items: center; }
.nav svg { width: 14px; height: 14px; }
.pageno { width: 38px; margin-left: 2px; border-radius: 0 3px 3px 0; }
.pageno select { padding-left: 10px; }
.of { padding: 0 2px 0 3px; }
.layer { width: 91px; margin-left: 1px; }
.layer select { padding-left: 2px; }
.chip { width: 11px; height: 8px; margin-left: 5px; background: #000; }
.vision { margin-left: auto; }
.select.disabled { width: 111px; margin-left: 2px; background: #f4f4f4; color: #7d7d7d; box-shadow: 0 0 0 1px #dcdcdc; }
.disabled select { opacity: 1; }
.disabled svg { background: none; color: #777; }
.position { display: grid; grid-template-columns: 69px 30px 105px 30px 1fr; gap: 4px; width: 368px; margin-left: auto; padding-top: 8px; align-items: center; }
.position progress { width: 69px; height: 4px; border: 1px solid #c4c4c4; border-radius: 2px; background: #dedede; appearance: none; }
.position progress::-webkit-progress-bar { background: #dedede; }
```

FILE: rulers.js
```javascript
// Draws inch rulers with quarter-inch ticks along the canvas edges.
(function () {
  var INCH = 50.45;
  var NS = "http://www.w3.org/2000/svg";

  function add(parent, name, attrs, text) {
    var node = document.createElementNS(NS, name);
    Object.keys(attrs).forEach(function (key) { node.setAttribute(key, attrs[key]); });
    if (text !== undefined) node.textContent = text;
    parent.appendChild(node);
  }

  function drawRuler(svg, origin, length, horizontal) {
    var first = Math.ceil(-origin / INCH * 4);
    for (var i = first; origin + i * INCH / 4 < length; i++) {
      var pos = Math.floor(origin + i * INCH / 4) + 0.5;
      var major = i % 4 === 0;
      var d = horizontal
        ? "M" + pos + " " + (major ? 2 : 9) + "V14"
        : "M" + (major ? 3 : 8) + " " + pos + "H12";
      add(svg, "path", { d: d, stroke: "#555" });
      if (major) {
        add(svg, "text", horizontal ? { x: pos + 1, y: 7 } : { x: 1, y: pos + 7 }, String(i / 4));
      }
    }
  }

  var h = document.getElementById("ruler-h");
  var v = document.getElementById("ruler-v");
  var width = h.getBoundingClientRect().width;
  var height = v.getBoundingClientRect().height;
  drawRuler(h, 363.8, width, true);
  add(h, "path", { d: "M0 14.5H" + width, stroke: "#888" });
  add(h, "path", { d: "M232.5 2V14", stroke: "#f01818" });
  add(h, "path", { d: "M230 2h5l-2.500 4z", fill: "#f01818" });
  drawRuler(v, 18, height, false);
  add(v, "path", { d: "M12.5 0V" + height, stroke: "#888" });
  add(v, "path", { d: "M0 .5H12", stroke: "#d01818" });
  add(v, "path", { d: "M0 240.500H5", stroke: "#f06060" });
})();
```
